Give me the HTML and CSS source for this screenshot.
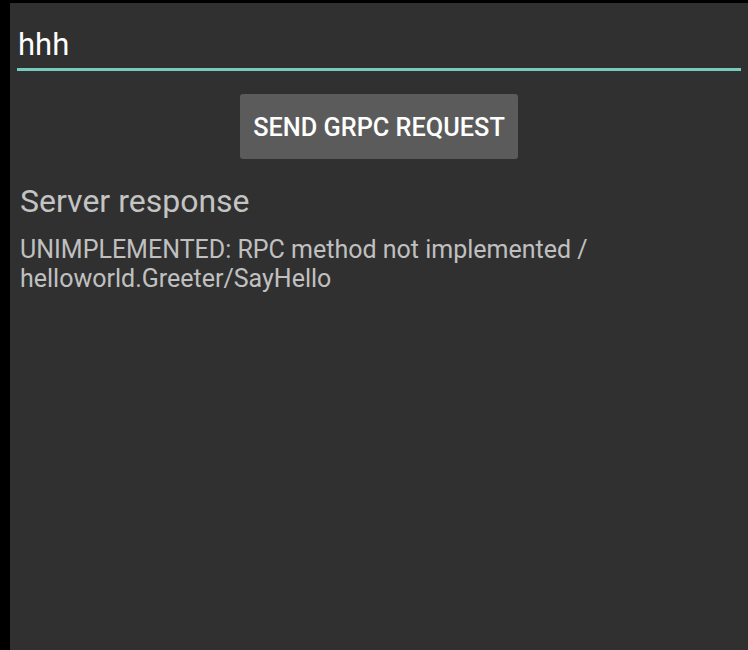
FILE: index.html
```html
<!DOCTYPE html>
<html>
<head>
<meta charset="utf-8">
<link rel="stylesheet" href="styles.css">
</head>
<body>
<div class="screen">
  <div class="field">
    <div class="field-text">hhh</div>
    <div class="field-line"></div>
  </div>
  <div class="actions">
    <button class="btn">SEND GRPC REQUEST</button>
  </div>
  <div class="response">
    <div class="response-title">Server response</div>
    <div class="response-body">UNIMPLEMENTED: RPC method not implemented /<br>helloworld.Greeter/SayHello</div>
  </div>
</div>
</body>
</html>
```

FILE: styles.css
```css
html, body {
  margin: 0;
  padding: 0;
  background: #000;
  height: 100%;
}
body {
  font-family: Roboto, "Noto Sans", sans-serif;
  overflow: hidden;
}
.screen {
  margin: 3px 0 0 10px;
  background: #303030;
  height: 647px;
  padding: 0 7px 0 7px;
  box-sizing: border-box;
}
.field {
  padding-top: 24px;
}
.field-text {
  color: #ffffff;
  font-size: 31px;
  line-height: 36px;
  padding-left: 1px;
}
.field-line {
  height: 3px;
  background: #77cbbe;
  margin-top: 5px;
}
.actions {
  display: flex;
  justify-content: center;
  padding-top: 23px;
}
.btn {
  width: 278px;
  height: 65px;
  background: #5b5b5b;
  color: #ffffff;
  border: none;
  border-radius: 3px;
  font-family: Roboto, sans-serif;
  font-weight: 500;
  font-size: 25.3px;
  padding: 2px 0 0 0;
}
.response {
  padding: 24px 0 0 3px;
}
.response-title {
  color: #c4c4c4;
  font-size: 32px;
  line-height: 36px;
}
.response-body {
  color: #c0c0c0;
  font-size: 25px;
  line-height: 29px;
  margin-top: 16px;
}
```
